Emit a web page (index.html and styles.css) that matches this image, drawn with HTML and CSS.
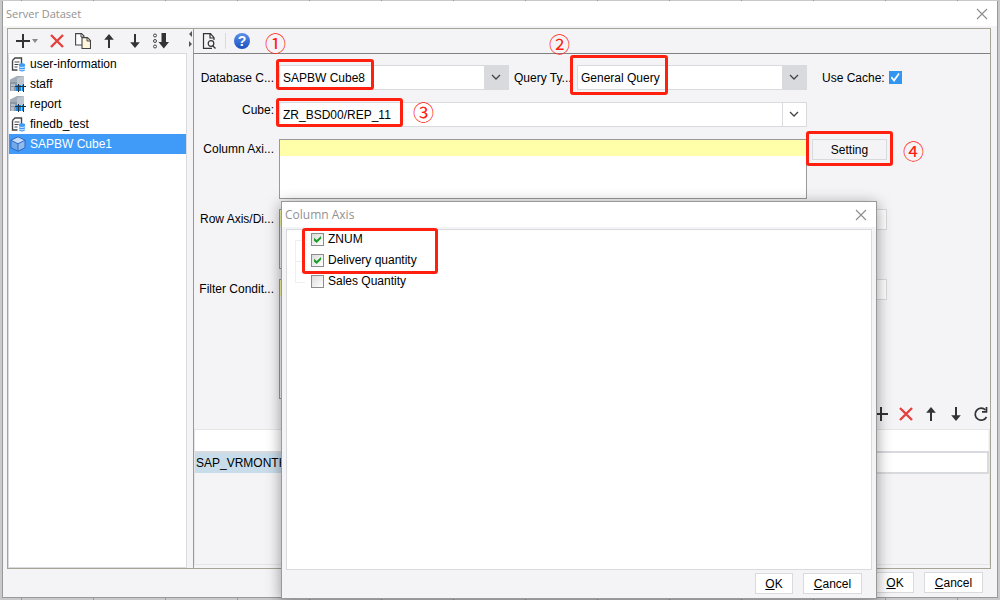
FILE: index.html
```html
<!DOCTYPE html>
<html lang="en">
<head>
    <meta charset="UTF-8">
    <meta name="viewport" content="width=device-width, initial-scale=1.0">
    <title>Server Dataset</title>
    <link rel="stylesheet" href="styles.css">
</head>
<body>
    <!-- Shared icons -->
    <svg class="sprite" aria-hidden="true">
        <symbol id="plus" viewBox="0 0 16 16"><path d="M8 1v14M1 8h14" stroke="#333" stroke-width="2"/></symbol>
        <symbol id="cross" viewBox="0 0 16 16"><path d="M2 2l12 12M14 2L2 14" stroke="#e5413c" stroke-width="2.4"/></symbol>
        <symbol id="up" viewBox="0 0 16 16"><path d="M8 15V4" stroke="#333" stroke-width="2"/><path d="M8 1L3.2 6.8h9.6z" fill="#333"/></symbol>
        <symbol id="down" viewBox="0 0 16 16"><path d="M8 1v11" stroke="#333" stroke-width="2"/><path d="M8 15L3.2 9.2h9.6z" fill="#333"/></symbol>
        <symbol id="close" viewBox="0 0 12 12"><path d="M1 1l10 10M11 1L1 11" stroke="#8c8c8c" stroke-width="1.1"/></symbol>
        <symbol id="chevron" viewBox="0 0 10 6"><path d="M1 1l4 4 4-4" fill="none" stroke="#444" stroke-width="1.3"/></symbol>
        <symbol id="database" viewBox="0 0 16 16">
            <path d="M2.500 4.500L5 2h6.500v6M2.500 4.500V14h5" fill="none" stroke="#444" stroke-width="1.4"/>
            <path d="M4.500 6h5M4.500 8.500h4M4.500 11h3" stroke="#444" stroke-width="1.2"/>
            <path d="M9 8.500v5.600c0 1.800 6 1.800 6 0V8.500z" fill="#409bf8"/>
            <ellipse cx="12" cy="8.600" rx="3" ry="1.3" fill="#409bf8"/>
            <path d="M9 10.700c1 1 5 1 6 0M9 13c1 1 5 1 6 0" fill="none" stroke="#fff" stroke-width=".8"/>
        </symbol>
        <symbol id="server" viewBox="0 0 16 16">
            <path d="M0 3.500L7 0h7v15H0z" fill="#a3adb8"/>
            <path d="M7 2l7-2v15H7z" fill="#bcc5ce"/>
            <path d="M0 6h7v9H0z" fill="#8d98a4"/>
            <path d="M1 9h4M1 12h3M1 14h3" stroke="#dfe4e8"/>
            <path d="M6 9h2v6H6zM9 9h2v6H9zM12 9h2v6h-2z" fill="#1c85dd"/>
            <path d="M5 10.500h11M8.500 8v8M13.500 8v8" stroke="#263442"/>
        </symbol>
        <symbol id="cube" viewBox="0 0 16 16">
            <path d="M8 .8l7 3.400v7.600L8 15.200 1 11.800V4.200z" fill="#6fa9e6"/>
            <path d="M8 .8l7 3.400-7 3.600-7-3.600z" fill="#c4ddf5"/>
            <path d="M8 7.800l7-3.600v7.600L8 15.200z" fill="#8fbdec"/>
            <path d="M8 .8l7 3.400v7.600L8 15.200 1 11.800V4.200zM1 4.200l7 3.600 7-3.600M8 7.800v7.400" fill="none" stroke="#2d5fc4" stroke-width=".9"/>
        </symbol>
    </svg>

    <div class="window">
        <header class="titlebar main-title">
            <span>Server Dataset</span>
            <button class="icon-btn close" aria-label="Close"><svg><use href="#close"/></svg></button>
        </header>

        <div class="panel">
            <!-- Dataset list -->
            <aside class="sidebar">
                <div class="toolbar">
                    <button class="icon-btn" aria-label="Add"><svg><use href="#plus"/></svg><i class="caret"></i></button>
                    <button class="icon-btn" aria-label="Delete"><svg><use href="#cross"/></svg></button>
                    <button class="icon-btn" aria-label="Copy">
                        <svg viewBox="0 0 16 16"><path d="M.6.6h6L9 3v9H.6z" fill="#fff" stroke="#444" stroke-width="1.100"/><path d="M6 .6V4h3" fill="none" stroke="#444"/><path d="M7 4.600h5.500l3 3v7.900H7z" fill="#fff6dd" stroke="#444" stroke-width="1.100"/><path d="M12 4.600V8h3.500" fill="none" stroke="#444"/></svg>
                    </button>
                    <button class="icon-btn" aria-label="Move up"><svg><use href="#up"/></svg></button>
                    <button class="icon-btn" aria-label="Move down"><svg><use href="#down"/></svg></button>
                    <button class="icon-btn" aria-label="Sort">
                        <svg viewBox="0 0 16 16"><g fill="none" stroke="#444"><circle cx="2" cy="2.500" r="1.500"/><circle cx="2" cy="8" r="1.500"/><circle cx="2" cy="13.500" r="1.500"/></g><path d="M8.500 0h4.500v9h3L10.800 15.500 5.500 9h3z" fill="#333"/></svg>
                    </button>
                </div>
                <ul class="datasets">
                    <li><svg><use href="#database"/></svg>user-information</li>
                    <li><svg><use href="#server"/></svg>staff</li>
                    <li><svg><use href="#server"/></svg>report</li>
                    <li><svg><use href="#database"/></svg>finedb_test</li>
                    <li class="selected"><svg><use href="#cube"/></svg>SAPBW Cube1</li>
                </ul>
            </aside>

            <div class="splitter">
                <svg viewBox="0 0 5 16"><path d="M4 0v6L1 3zM1 10v6l3-3z" fill="#555"/></svg>
            </div>

            <!-- Query settings -->
            <main class="content">
                <div class="toolbar main-toolbar">
                    <button class="icon-btn" aria-label="Preview">
                        <svg viewBox="0 0 16 16"><path d="M6 15.300H2.500V.7h7l3.500 4V7M9 .7V5h4" fill="none" stroke="#333" stroke-width="1.200"/><circle cx="10" cy="10.500" r="2.800" fill="none" stroke="#333" stroke-width="1.200"/><path d="M11.500 12.500l3 3M6 15.300h5" stroke="#333" stroke-width="1.300"/></svg>
                    </button>
                    <span class="divider"></span>
                    <button class="icon-btn help" aria-label="Help">?</button>
                </div>

                <form class="query-form">
                    <div class="form-row">
                        <label class="middle" for="connection">Database C...</label>
                        <div class="field">
                            <div class="combo disabled">
                                <select id="connection"><option>SAPBW Cube8</option></select>
                                <svg class="arrow"><use href="#chevron"/></svg>
                                <span class="mark mark-connection"></span>
                                <span class="step step-1">①</span>
                            </div>
                            <label class="query-label" for="queryType">Query Ty...</label>
                            <div class="combo disabled">
                                <select id="queryType"><option>General Query</option></select>
                                <svg class="arrow"><use href="#chevron"/></svg>
                                <span class="mark mark-query"></span>
                                <span class="step step-2">②</span>
                            </div>
                        </div>
                        <div class="cache">
                            <label for="useCache">Use Cache:</label>
                            <input type="checkbox" id="useCache" class="check blue" checked>
                        </div>
                    </div>
                    <div class="form-row">
                        <label for="cube">Cube:</label>
                        <div class="field">
                            <div class="combo">
                                <select id="cube"><option>ZR_BSD00/REP_11</option></select>
                                <svg class="arrow"><use href="#chevron"/></svg>
                                <span class="mark mark-cube"></span>
                                <span class="step step-3">③</span>
                            </div>
                        </div>
                    </div>
                    <div class="form-row axis">
                        <label for="columnAxis">Column Axi...</label>
                        <textarea id="columnAxis" readonly></textarea>
                        <div class="setting">
                            <button type="button" class="btn flat">Setting</button>
                            <span class="mark mark-setting"></span>
                            <span class="step step-4">④</span>
                        </div>
                    </div>
                    <div class="form-row axis">
                        <label for="rowAxis">Row Axis/Di...</label>
                        <textarea id="rowAxis" readonly></textarea>
                        <div class="setting"><button type="button" class="btn" aria-label="Row axis setting"></button></div>
                    </div>
                    <div class="form-row axis filter">
                        <label for="filter">Filter Condit...</label>
                        <textarea id="filter" readonly></textarea>
                        <div class="setting"><button type="button" class="btn" aria-label="Filter setting"></button></div>
                    </div>
                </form>

                <div class="toolbar param-toolbar">
                    <button class="icon-btn" aria-label="Add parameter"><svg><use href="#plus"/></svg></button>
                    <button class="icon-btn" aria-label="Delete parameter"><svg><use href="#cross"/></svg></button>
                    <button class="icon-btn" aria-label="Move parameter up"><svg><use href="#up"/></svg></button>
                    <button class="icon-btn" aria-label="Move parameter down"><svg><use href="#down"/></svg></button>
                    <button class="icon-btn" aria-label="Refresh">
                        <svg viewBox="0 0 16 16"><path d="M12.500 4A6 6 0 1 0 13.500 11" fill="none" stroke="#333" stroke-width="1.700"/><path d="M13.500 1v4.800H9" fill="none" stroke="#333" stroke-width="1.700"/></svg>
                    </button>
                </div>
                <div class="params">
                    <table>
                        <thead><tr><th></th><th></th></tr></thead>
                        <tbody><tr><td class="name">SAP_VRMONTH</td><td class="value"></td></tr></tbody>
                    </table>
                </div>
            </main>
        </div>

        <footer class="actions">
            <button class="btn"><u>O</u>K</button>
            <button class="btn wide"><u>C</u>ancel</button>
        </footer>

        <!-- Column axis dialog -->
        <section class="dialog" role="dialog" aria-label="Column Axis">
            <header class="titlebar">
                <span>Column Axis</span>
                <button class="icon-btn close" aria-label="Close dialog"><svg><use href="#close"/></svg></button>
            </header>
            <ul class="tree">
                <li><input type="checkbox" id="znum" class="check" checked><label for="znum">ZNUM</label></li>
                <li><input type="checkbox" id="delivery" class="check" checked><label for="delivery">Delivery quantity</label></li>
                <li><input type="checkbox" id="sales" class="check"><label for="sales">Sales Quantity</label></li>
                <li class="mark mark-tree"></li>
            </ul>
            <footer class="actions">
                <button class="btn"><u>O</u>K</button>
                <button class="btn wide"><u>C</u>ancel</button>
            </footer>
        </section>
    </div>
</body>
</html>
```

FILE: styles.css
```css
:root {
    --panel-color: #f4f4f7;
    --line-color: #d9dadd;
    --dark-line-color: #999999;
    --panel-line-color: #a5a496;
    --mark-color: #ff2010;
    --select-color: #409bf8;
}

* {
    box-sizing: border-box;
}

body {
    margin: 0;
    padding: 1px 2px 2px;
    height: 100vh;
    overflow: hidden;
    display: flex;
    background: repeating-linear-gradient(90deg, #c9c9cb 0 21px, #999999 21px 22px, #c9c9cb 22px 72px);
    font-family: "Liberation Sans", Arial, sans-serif;
    font-size: 12px;
    line-height: 16px;
    color: #000000;
}

.sprite {
    display: none;
}

button,
select,
textarea {
    font: inherit;
    color: inherit;
}

.window {
    position: relative;
    flex: 1;
    display: flex;
    flex-direction: column;
    border: 1px solid var(--dark-line-color);
    border-top: none;
    background-color: var(--panel-color);
}

.titlebar {
    display: flex;
    align-items: center;
    justify-content: space-between;
    height: 25px;
    padding: 0 9px 0 3px;
    background-color: #ffffff;
    color: #929292;
    font-family: "Open Sans", "Noto Sans", sans-serif;
    font-size: 12px;
}

.main-title {
    font-size: 11px;
}

.icon-btn {
    display: flex;
    align-items: center;
    justify-content: center;
    padding: 0;
    border: none;
    background: none;
}

.icon-btn svg {
    width: 16px;
    height: 16px;
}

.close svg {
    width: 12px;
    height: 12px;
}

.panel {
    flex: 1;
    display: flex;
    min-height: 0;
    margin: 2px 6px 0 4px;
    border: 1px solid var(--panel-line-color);
}

.toolbar {
    display: flex;
    align-items: center;
    height: 24px;
}

/* Dataset list */
.sidebar {
    display: flex;
    flex-direction: column;
    width: 179px;
}

.sidebar .toolbar {
    gap: 10px;
    padding-left: 7px;
}

.caret {
    margin: 0 -6px 0 1px;
    border: 3px solid transparent;
    border-top: 4px solid #888888;
    border-bottom: none;
}

.sidebar .icon-btn:first-child {
    margin-right: 7px;
}

.datasets {
    flex: 1;
    margin: 0;
    padding: 0;
    list-style: none;
    border: 1px solid var(--line-color);
    background-color: #ffffff;
}

.datasets li {
    display: flex;
    align-items: center;
    gap: 4px;
    height: 20px;
    padding-left: 1px;
}

.datasets svg {
    width: 16px;
    height: 16px;
}

.datasets .selected {
    background-color: var(--select-color);
    color: #ffffff;
}

.splitter {
    width: 7px;
    padding: 2px 0 0 1px;
    border-right: 1px solid var(--dark-line-color);
}

.splitter svg {
    display: block;
    width: 5px;
    height: 16px;
}

/* Query settings */
.content {
    flex: 1;
    display: flex;
    flex-direction: column;
    min-width: 0;
}

.main-toolbar {
    height: 25px;
    gap: 8px;
    padding-left: 7px;
    border-bottom: 1px solid #808080;
}

.divider {
    width: 1px;
    height: 16px;
    background-color: var(--line-color);
}

.help {
    width: 16px;
    height: 16px;
    border-radius: 50%;
    background: linear-gradient(#5b92ea, #1c4fc0);
    color: #ffffff;
    font-size: 14px;
    font-weight: bold;
}

.query-form {
    padding-top: 11px;
}

.form-row {
    display: grid;
    grid-template-columns: 80px 1fr 178px;
    align-items: start;
    gap: 5px;
    margin-bottom: 12px;
}

.form-row > label {
    text-align: right;
    white-space: nowrap;
}

.form-row > .middle {
    align-self: center;
}

.field {
    display: flex;
    align-items: center;
    gap: 5px;
}

.query-label {
    width: 58px;
    white-space: nowrap;
}

.combo {
    position: relative;
    flex: 1;
    height: 25px;
}

.combo select {
    display: block;
    width: 100%;
    height: 100%;
    padding: 0 3px;
    border: 1px solid var(--line-color);
    border-radius: 0;
    appearance: none;
    background: linear-gradient(var(--line-color), var(--line-color)) right 23px top no-repeat #ffffff;
    background-size: 1px 100%;
}

.combo.disabled select {
    background-position: right top;
    background-size: 24px 100%;
}

.arrow {
    position: absolute;
    top: 9px;
    right: 8px;
    width: 10px;
    height: 6px;
    pointer-events: none;
}

.cache {
    display: flex;
    align-items: center;
    align-self: center;
    gap: 4px;
    padding-left: 10px;
}

.check {
    width: 13px;
    height: 13px;
    margin: 0;
    appearance: none;
    border: 1px solid #8c8c8c;
    background: linear-gradient(135deg, #dcdcdc, #ffffff);
    display: grid;
    place-items: center;
}

.check:checked::before {
    content: "";
    width: 7px;
    height: 7px;
    background-color: #1f9d2b;
    clip-path: polygon(0 25%, 38% 58%, 100% 0, 100% 38%, 38% 100%, 0 68%);
}

.check.blue {
    border-color: #3296f0;
    background: #3296f0;
}

.check.blue:checked::before {
    width: 9px;
    height: 9px;
    background-color: #ffffff;
    clip-path: polygon(0 52%, 14% 40%, 36% 68%, 86% 0, 100% 12%, 38% 100%);
}

.axis {
    margin-bottom: 10px;
}

.axis label {
    line-height: 20px;
}

.axis textarea {
    display: block;
    width: 100%;
    height: 60px;
    padding: 0;
    resize: none;
    border: 1px solid var(--dark-line-color);
    border-radius: 0;
    background: linear-gradient(#ffffaa 16px, #ffffff 16px);
}

.filter {
    margin-bottom: 0;
}

.filter textarea {
    height: 120px;
}

.setting {
    position: relative;
}

.btn {
    display: block;
    width: 38px;
    height: 21px;
    padding: 0;
    border: 1px solid var(--line-color);
    border-radius: 0;
    background-color: #ffffff;
}

.btn.wide {
    width: 59px;
}

.setting .btn {
    width: 75px;
}

.btn.flat {
    background-color: var(--panel-color);
}

.param-toolbar {
    height: 30px;
    gap: 9px;
    justify-content: flex-end;
    padding-right: 1px;
}

.params {
    flex: 1;
    margin-bottom: 3px;
    border: 1px solid #e6e6e8;
}

.params table {
    width: 100%;
    border-collapse: collapse;
}

.params th {
    height: 22px;
    padding: 0;
    border-bottom: 2px solid var(--line-color);
    background-color: #ffffff;
}

.params td {
    height: 21px;
    padding: 0 1px;
    background-color: #ffffff;
}

.params .name {
    width: 50%;
    background-color: #c9dce9;
}

.params .value {
    border: 2px solid var(--line-color);
}

.actions {
    display: flex;
    justify-content: flex-end;
    gap: 10px;
    padding: 3px 14px 4px;
}

/* Column axis dialog */
.dialog {
    position: absolute;
    top: 200px;
    right: 120px;
    bottom: -2px;
    width: 596px;
    display: flex;
    flex-direction: column;
    border: 1px solid var(--dark-line-color);
    background-color: var(--panel-color);
    box-shadow: 0 3px 14px rgba(0, 0, 0, 0.4);
}

.tree {
    position: relative;
    flex: 1;
    margin: 2px 4px 0;
    padding: 0;
    list-style: none;
    border: 1px solid var(--line-color);
    background-color: #ffffff;
}

.tree li:not(.mark) {
    display: flex;
    align-items: flex-start;
    gap: 4px;
    height: 21px;
    padding: 3px 0 0 24px;
    line-height: 13px;
    background: linear-gradient(#eeeeee, #eeeeee) 8px 10px / 10px 1px no-repeat,
        linear-gradient(#eeeeee, #eeeeee) 8px 0 / 1px 100% no-repeat;
}

.tree li:first-child {
    background-position: 8px 10px, 8px 10px;
}

.tree li:nth-child(3) {
    background-size: 10px 1px, 1px 10px;
}

/* Step annotations */
.mark {
    position: absolute;
    border: 3px solid var(--mark-color);
    border-radius: 3px;
    pointer-events: none;
}

.mark-connection {
    top: -6px;
    left: -3px;
    width: 98px;
    height: 31px;
}

.mark-query {
    top: -10px;
    left: -7px;
    width: 98px;
    height: 40px;
}

.mark-cube {
    top: -4px;
    left: -3px;
    width: 127px;
    height: 29px;
}

.mark-setting {
    top: -8px;
    left: -6px;
    width: 87px;
    height: 35px;
}

.mark-tree {
    top: -2px;
    left: 15px;
    width: 136px;
    height: 46px;
}

.step {
    position: absolute;
    color: var(--mark-color);
    font-family: "Noto Sans CJK SC", sans-serif;
    font-size: 21px;
    line-height: 22px;
    pointer-events: none;
}

.step-1 {
    top: -34px;
    left: -14px;
}

.step-2 {
    top: -33px;
    left: -28px;
}

.step-3 {
    top: -2px;
    left: 134px;
}

.step-4 {
    top: 0;
    left: 91px;
}
```
